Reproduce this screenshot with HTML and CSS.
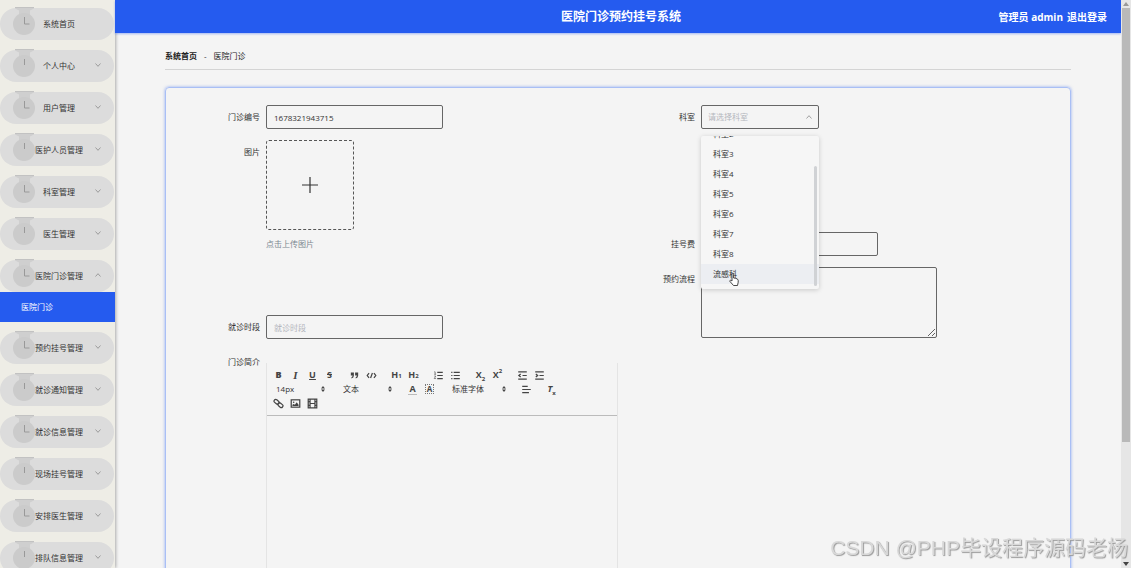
FILE: index.html
```
<!DOCTYPE html>
<html lang="zh-cn">
<head>
<meta charset="UTF-8">
<meta name="viewport" content="width=device-width, initial-scale=1.0">
<title>医院门诊预约挂号系统</title>
<link rel="stylesheet" href="styles.css">
</head>
<body>
<svg class="sprite" aria-hidden="true">
  <symbol id="clock" viewBox="0 0 22 29">
    <path d="M2 0h19v1.500l-4 2v6H6v-6l-4-2z" fill="#cfcfcf"/>
    <path d="M2 .5h19" stroke="#c2c2c2"/>
    <circle cx="11" cy="17" r="11" fill="#cbcbcb"/>
    <path d="M11.500 10v7h5" fill="none" stroke="#999"/>
  </symbol>
  <symbol id="clock2" viewBox="0 0 22 29">
    <path d="M2 0h19v1.500l-4 2v6H6v-6l-4-2z" fill="#cfcfcf"/>
    <path d="M2 .5h19" stroke="#c2c2c2"/>
    <circle cx="11" cy="17" r="11" fill="#cbcbcb"/>
    <path d="M11.500 10v6" fill="none" stroke="#999"/>
  </symbol>
  <symbol id="down" viewBox="0 0 6 4"><path d="M.5 .5L3 3.300 5.500 .5" fill="none" stroke="#8c8c8c" stroke-width=".8"/></symbol>
  <symbol id="up" viewBox="0 0 6 4"><path d="M.5 3.500L3 .7 5.500 3.500" fill="none" stroke="#8c8c8c" stroke-width=".8"/></symbol>
  <symbol id="updown" viewBox="0 0 4 6"><path d="M0 2.500L2 0l2 2.500zM0 3.500L2 6l2-2.500z" fill="#444"/></symbol>
</svg>

<div class="layout">
  <nav class="sidebar">
    <ul class="menu">
      <li><a class="pill" href="#"><svg class="clock"><use href="#clock"/></svg>系统首页</a></li>
      <li><a class="pill" href="#"><svg class="clock"><use href="#clock2"/></svg>个人中心<svg class="arrow"><use href="#down"/></svg></a></li>
      <li><a class="pill" href="#"><svg class="clock"><use href="#clock"/></svg>用户管理<svg class="arrow"><use href="#down"/></svg></a></li>
      <li><a class="pill" href="#"><svg class="clock"><use href="#clock2"/></svg>医护人员管理<svg class="arrow"><use href="#down"/></svg></a></li>
      <li><a class="pill" href="#"><svg class="clock"><use href="#clock"/></svg>科室管理<svg class="arrow"><use href="#down"/></svg></a></li>
      <li><a class="pill" href="#"><svg class="clock"><use href="#clock2"/></svg>医生管理<svg class="arrow"><use href="#down"/></svg></a></li>
      <li>
        <a class="pill" href="#"><svg class="clock"><use href="#clock"/></svg>医院门诊管理<svg class="arrow"><use href="#up"/></svg></a>
        <a class="sub" href="#">医院门诊</a>
      </li>
      <li><a class="pill" href="#"><svg class="clock"><use href="#clock"/></svg>预约挂号管理<svg class="arrow"><use href="#down"/></svg></a></li>
      <li><a class="pill" href="#"><svg class="clock"><use href="#clock2"/></svg>就诊通知管理<svg class="arrow"><use href="#down"/></svg></a></li>
      <li><a class="pill" href="#"><svg class="clock"><use href="#clock"/></svg>就诊信息管理<svg class="arrow"><use href="#down"/></svg></a></li>
      <li><a class="pill" href="#"><svg class="clock"><use href="#clock2"/></svg>现场挂号管理<svg class="arrow"><use href="#down"/></svg></a></li>
      <li><a class="pill" href="#"><svg class="clock"><use href="#clock"/></svg>安排医生管理<svg class="arrow"><use href="#down"/></svg></a></li>
      <li><a class="pill" href="#"><svg class="clock"><use href="#clock2"/></svg>排队信息管理<svg class="arrow"><use href="#down"/></svg></a></li>
    </ul>
  </nav>

  <div class="page">
    <header class="header">
      <h1>医院门诊预约挂号系统</h1>
      <div class="user"><span>管理员 admin</span><a href="#">退出登录</a></div>
    </header>

    <main class="main">
      <div class="crumb"><b>系统首页</b><span class="sep">-</span><span>医院门诊</span></div>

      <form class="card">
        <div class="col">
          <div class="row">
            <label for="no">门诊编号</label>
            <input class="field" id="no" type="text" value="1678321943715">
          </div>
          <div class="row row-pic">
            <label for="pic">图片</label>
            <div>
              <button class="upload" id="pic" type="button" aria-label="上传图片">
                <svg viewBox="0 0 16 16"><path d="M8 0v16M0 8h16" stroke="#333" stroke-width="1.200"/></svg>
              </button>
              <p class="tip">点击上传图片</p>
            </div>
          </div>
          <div class="row">
            <label for="time">就诊时段</label>
            <input class="field" id="time" type="text" placeholder="就诊时段">
          </div>
          <div class="row row-editor">
            <label for="intro">门诊简介</label>
            <div class="editor">
              <div class="toolbar">
                <div class="tools">
                  <span class="group">
                    <button type="button"><b>B</b></button>
                    <button type="button" class="serif"><i>I</i></button>
                    <button type="button"><u>U</u></button>
                    <button type="button"><s>S</s></button>
                  </span>
                  <span class="group">
                    <button type="button" aria-label="引用"><svg viewBox="0 0 18 18"><path d="M3 4h5v5q0 4-4 5v-2q2-1 2-3H3zM10 4h5v5q0 4-4 5v-2q2-1 2-3h-3z" fill="#444"/></svg></button>
                    <button type="button" aria-label="代码"><svg viewBox="0 0 18 18"><path d="M5 5L2 9l3 4M13 5l3 4-3 4M10.500 5l-3 8" class="st"/></svg></button>
                  </span>
                  <span class="group">
                    <button type="button">H<small>1</small></button>
                    <button type="button">H<small>2</small></button>
                  </span>
                  <span class="group">
                    <button type="button" aria-label="有序列表"><svg viewBox="0 0 18 18"><path d="M7 4h9M7 9h9M7 14h9" class="st"/><path d="M2 3h1.500v4M2 7h3M2 10h2.500L2 14h3" class="thin"/></svg></button>
                    <button type="button" aria-label="无序列表"><svg viewBox="0 0 18 18"><path d="M6 4h10M6 9h10M6 14h10M2 4h2M2 9h2M2 14h2" class="st"/></svg></button>
                  </span>
                  <span class="group">
                    <button type="button">X<sub>2</sub></button>
                    <button type="button">X<sup>2</sup></button>
                  </span>
                  <span class="group">
                    <button type="button" aria-label="减少缩进"><svg viewBox="0 0 18 18"><path d="M2 3h14M9 9h7M2 15h14M6 6.500L3 9l3 2.500" class="st"/></svg></button>
                    <button type="button" aria-label="增加缩进"><svg viewBox="0 0 18 18"><path d="M2 3h14M9 9h7M2 15h14M3 6.500L6 9l-3 2.500" class="st"/></svg></button>
                  </span>
                </div>
                <div class="tools">
                  <span class="picker size"><select aria-label="字号"><option>14px</option></select><svg><use href="#updown"/></svg></span>
                  <span class="picker size"><select aria-label="标题"><option>文本</option></select><svg><use href="#updown"/></svg></span>
                  <span class="group">
                    <button type="button" class="color">A</button>
                    <button type="button" class="back">A</button>
                  </span>
                  <span class="picker font"><select aria-label="字体"><option>标准字体</option></select><svg><use href="#updown"/></svg></span>
                  <span class="group">
                    <button type="button" aria-label="对齐"><svg viewBox="0 0 18 18"><path d="M2 4h9M2 9h14M2 14h11" class="st"/></svg></button>
                  </span>
                  <span class="group">
                    <button type="button"><i>T</i><sub>x</sub></button>
                  </span>
                </div>
                <div class="tools">
                  <span class="group">
                    <button type="button" aria-label="链接"><svg viewBox="0 0 18 18"><rect x="1.500" y="3.500" width="9" height="5.500" rx="2.700" transform="rotate(40 6 6)" class="st"/><rect x="7.500" y="9" width="9" height="5.500" rx="2.700" transform="rotate(40 12 12)" class="st"/></svg></button>
                    <button type="button" aria-label="图片"><svg viewBox="0 0 18 18"><rect x="2" y="3" width="14" height="12" class="st"/><circle cx="6" cy="7" r="1.300" fill="#444"/><path d="M4 13v-2l2-1 2 1 3-4 3 4v2z" fill="#444"/></svg></button>
                    <button type="button" aria-label="视频"><svg viewBox="0 0 18 18"><path d="M2 2h14v14H2zM5 2v14M13 2v14M5 9h8M2 6h3M2 12h3M13 6h3M13 12h3" class="st"/></svg></button>
                  </span>
                </div>
              </div>
              <textarea class="content" id="intro"></textarea>
            </div>
          </div>
        </div>

        <div class="col">
          <div class="row row-dept">
            <label for="dept">科室</label>
            <div class="select">
              <select class="field" id="dept"><option>请选择科室</option></select>
              <svg class="caret"><use href="#up"/></svg>
              <div class="dropdown">
                <ul>
                  <li>科室2</li>
                  <li>科室3</li>
                  <li>科室4</li>
                  <li>科室5</li>
                  <li>科室6</li>
                  <li>科室7</li>
                  <li>科室8</li>
                  <li class="hover">流感科</li>
                </ul>
                <span class="bar"></span>
              </div>
              <svg class="cursor" viewBox="0 0 10 13"><path d="M3 8V1.500q0-1 .8-1t.8 1V5q2.500 0 4 1.200.9.800.6 3L8.500 12.500h-4L1 8.500q-.5-1 .3-1.200T3 8z" fill="#fff" stroke="#333" stroke-width=".9"/></svg>
            </div>
          </div>
          <div class="row">
            <label for="fee">挂号费</label>
            <input class="field" id="fee" type="text">
          </div>
          <div class="row">
            <label for="flow">预约流程</label>
            <textarea class="field area" id="flow"></textarea>
          </div>
        </div>
      </form>
    </main>
  </div>

  <div class="scroll">
    <svg viewBox="0 0 6 4"><path d="M0 4l3-4 3 4z" fill="#999"/></svg>
    <span class="thumb"></span>
    <svg viewBox="0 0 6 4"><path d="M0 0l3 4 3-4z" fill="#444"/></svg>
  </div>
</div>
<div class="watermark">CSDN @PHP毕设程序源码老杨</div>
</body>
</html>
```
FILE: styles.css
```
* {
  box-sizing: border-box;
}

body {
  margin: 0;
  height: 100vh;
  overflow: hidden;
  background: #f4f4f4;
  color: #333;
  font-family: "Open Sans", "Noto Sans CJK SC", sans-serif;
  font-size: 8px;
  line-height: 12px;
}

a {
  color: inherit;
  text-decoration: none;
}

ul, p, h1 {
  margin: 0;
  padding: 0;
  list-style: none;
}

input, select, textarea, button {
  font: inherit;
  color: inherit;
}

.sprite {
  display: none;
}

.layout {
  display: flex;
  height: 100vh;
}

/* 左侧菜单 */
.sidebar {
  flex: 0 0 115px;
  overflow: hidden;
  padding-top: 8px;
  background: #eeede6;
  box-shadow: 1px 0 3px rgba(0, 0, 0, 0.3);
}

.menu li {
  margin-bottom: 10px;
}

.pill {
  position: relative;
  z-index: 0;
  display: block;
  height: 32px;
  margin-right: 1px;
  padding-left: 4px;
  border-radius: 16px;
  background: #dcdcdc;
  line-height: 32px;
  text-align: center;
}

.clock {
  position: absolute;
  left: 13px;
  top: -1px;
  z-index: -1;
  width: 22px;
  height: 29px;
}

.arrow {
  position: absolute;
  right: 13px;
  top: 13px;
  width: 6px;
  height: 4px;
}

.sub {
  display: block;
  padding-left: 21px;
  background: #255bef;
  color: #fff;
  line-height: 30px;
}

.page {
  flex: 1;
  min-width: 0;
}

.header {
  display: grid;
  grid-template-columns: 1fr auto 1fr;
  align-items: center;
  height: 33px;
  padding: 0 14px 0 20px;
  background: #255bef;
  box-shadow: 0 1px 2px rgba(37, 91, 239, 0.4);
  color: #fff;
}

.header h1 {
  grid-column: 2;
  font-size: 12px;
}

.user {
  display: flex;
  justify-content: flex-end;
  gap: 4px;
  font-size: 10px;
  font-weight: bold;
}

.main {
  padding: 17px 50px 0;
}

.crumb {
  display: flex;
  padding-bottom: 7px;
  border-bottom: 1px solid #d4d4d4;
  color: #222;
}

.crumb .sep {
  padding: 0 7px;
}

.card {
  display: flex;
  min-height: 600px;
  margin-top: 17px;
  padding: 17px;
  border: 1px solid #a9bff5;
  border-radius: 4px;
  box-shadow: 0 0 3px rgba(37, 91, 239, 0.5);
}

.col {
  flex: 1;
  min-width: 0;
}

.row {
  display: flex;
  gap: 6px;
  margin-bottom: 11px;
}

.row label {
  flex: 0 0 77px;
  line-height: 24px;
  text-align: right;
}

.field {
  width: 177px;
  height: 24px;
  padding: 0 7px;
  border: 1px solid #666;
  border-radius: 2px;
  background: transparent;
  outline: none;
}

.field::placeholder {
  color: #b4b7be;
}

.row-pic {
  height: 164px;
}

.upload {
  display: flex;
  align-items: center;
  justify-content: center;
  width: 88px;
  height: 90px;
  padding: 0;
  border: 1px dashed #555;
  border-radius: 3px;
  background: transparent;
}

.upload svg {
  width: 16px;
  height: 16px;
}

.tip {
  margin-top: 8px;
  color: #7b8790;
}

/* 下拉框 */
.row-dept {
  margin-bottom: 103px;
}

.select {
  position: relative;
  width: 118px;
}

.select .field {
  display: block;
  width: 100%;
  padding: 0 6px;
  appearance: none;
  color: #b4b7be;
}

.caret {
  position: absolute;
  right: 7px;
  top: 10px;
  width: 6px;
  height: 4px;
}

.dropdown {
  position: absolute;
  left: 0;
  right: 0;
  top: 31px;
  height: 153px;
  overflow: hidden;
  border-radius: 2px;
  background: #f6f6f6;
  box-shadow: 0 1px 5px rgba(0, 0, 0, 0.18);
}

.dropdown ul {
  margin-top: -12px;
}

.dropdown li {
  padding-left: 12px;
  line-height: 20px;
}

.dropdown .hover {
  background: #eceef2;
}

.bar {
  position: absolute;
  right: 2px;
  top: 30px;
  bottom: 3px;
  width: 3px;
  border-radius: 2px;
  background: #d0d2d5;
}

.cursor {
  position: absolute;
  left: 28px;
  top: 168px;
  width: 10px;
  height: 13px;
}

.area {
  width: 236px;
  height: 71px;
}

/* 富文本编辑器 */
.editor {
  flex: 1;
  margin-top: 13px;
  border: solid #e4e4e4;
  border-width: 0 1px;
}

.toolbar {
  padding: 5px 3px;
  border-bottom: 1px solid #bbb;
}

.tools {
  display: flex;
  gap: 8px;
  height: 14px;
}

.group {
  display: flex;
}

.tools button {
  display: flex;
  align-items: center;
  justify-content: center;
  width: 17px;
  height: 14px;
  padding: 0;
  border: 0;
  background: none;
  color: #444;
  font-size: 9px;
  font-weight: bold;
}

.tools button svg {
  width: 11px;
  height: 11px;
}

.tools .serif {
  font-family: "Liberation Serif", serif;
  font-size: 11px;
}

.tools small, .tools sub, .tools sup {
  font-size: 6px;
  line-height: 6px;
}

.tools small {
  padding-top: 2px;
}

.tools sub {
  align-self: flex-end;
}

.tools sup {
  align-self: flex-start;
}

.st {
  fill: none;
  stroke: #444;
  stroke-width: 2;
}

.thin {
  fill: none;
  stroke: #444;
}

.tools .color {
  height: 12px;
  width: 9px;
  margin: 1px 4px;
  border-bottom: 1px solid #bbb;
}

.tools .back {
  height: 10px;
  width: 9px;
  margin: 2px 4px;
  border: 1px dotted #777;
  font-size: 8px;
}

.picker {
  position: relative;
  width: 59px;
}

.picker.font {
  width: 64px;
}

.picker select {
  display: block;
  width: 100%;
  height: 14px;
  padding: 0 6px;
  border: 0;
  background: none;
  appearance: none;
}

.picker svg {
  position: absolute;
  right: 4px;
  top: 4px;
  width: 4px;
  height: 6px;
}

.content {
  display: block;
  width: 100%;
  height: 240px;
  border: 0;
  background: none;
  resize: none;
}

.scroll {
  display: flex;
  flex: 0 0 10px;
  flex-direction: column;
  align-items: center;
  padding: 2px 0;
  background: #e6e6e6;
}

.scroll svg {
  width: 6px;
  height: 4px;
}

.thumb {
  width: 8px;
  height: 77%;
  margin: 2px 0 auto;
  background: #b9b9b9;
}

.watermark {
  position: fixed;
  right: 3px;
  bottom: 4px;
  color: #d8d8d8;
  font-family: "Liberation Sans", "Noto Sans CJK SC", sans-serif;
  font-size: 21px;
  line-height: 32px;
  text-shadow: 1px 1px 1px #999;
}
```
